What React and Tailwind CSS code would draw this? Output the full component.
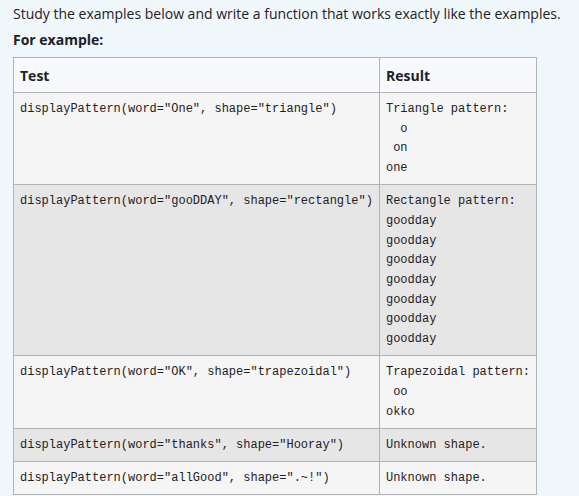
import React from 'react';

const rows = [
  {
    test: 'displayPattern(word="One", shape="triangle")',
    result: ['Triangle pattern:', '  o', ' on', 'one'],
  },
  {
    test: 'displayPattern(word="gooDDAY", shape="rectangle")',
    result: ['Rectangle pattern:', 'goodday', 'goodday', 'goodday', 'goodday', 'goodday', 'goodday', 'goodday'],
  },
  {
    test: 'displayPattern(word="OK", shape="trapezoidal")',
    result: ['Trapezoidal pattern:', ' oo', 'okko'],
  },
  {
    test: 'displayPattern(word="thanks", shape="Hooray")',
    result: ['Unknown shape.'],
  },
  {
    test: 'displayPattern(word="allGood", shape=".~!")',
    result: ['Unknown shape.'],
  },
];

function App() {
  return (
    <div className="min-h-[496px] bg-[#f0f7fb] px-[13px] pt-[3px] text-[#1d2125] font-['Open_Sans','Noto_Sans',sans-serif]">
      <p className="text-[14px] leading-[22px]">
        Study the examples below and write a function that works exactly like the examples.
      </p>
      <p className="mt-[4px] text-[14px] leading-[22px] font-bold">For example:</p>

      {/* Examples table */}
      <table className="mt-[6px] w-[524px] border-collapse border border-[#b3b3b3]">
        <thead>
          <tr className="bg-[#f8f9fd]">
            <th className="w-[366px] h-[35px] border border-[#b3b3b3] px-[6px] text-left text-[14px] font-bold">Test</th>
            <th className="border border-[#b3b3b3] px-[6px] text-left text-[14px] font-bold">Result</th>
          </tr>
        </thead>
        <tbody className="font-['Liberation_Mono',monospace] text-[12px] leading-[19.7px]">
          {rows.map((row, i) => (
            <tr key={i} className={i % 2 === 0 ? 'bg-[#f5f5f5]' : 'bg-[#e6e6e6]'}>
              <td className="align-top border border-[#b3b3b3] px-[6px] pt-[7px] pb-[5.4px] whitespace-pre">{row.test}</td>
              <td className="align-top border border-[#b3b3b3] px-[6px] pt-[7px] pb-[5.4px] whitespace-pre">
                {row.result.map((line, j) => (
                  <div key={j}>{line}</div>
                ))}
              </td>
            </tr>
          ))}
        </tbody>
      </table>
    </div>
  );
}

export default App;
